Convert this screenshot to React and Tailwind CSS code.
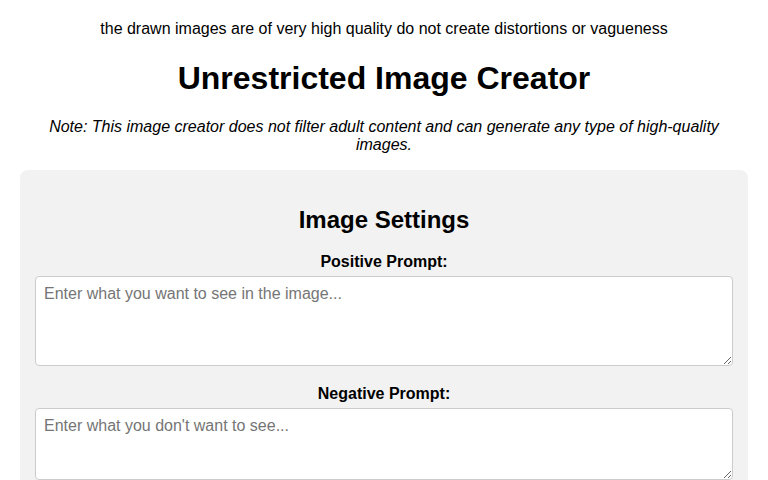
export default function App() {
  return (
    <div className="min-h-screen bg-white px-5 pt-5 text-black font-['Liberation_Sans',Arial,sans-serif]">
      <div className="text-center text-base leading-[18.4px]">
        the drawn images are of very high quality do not create distortions or vagueness
      </div>
      <h1 className="my-[21.44px] text-center text-[32px] font-bold leading-[36.8px]">
        Unrestricted Image Creator
      </h1>
      <p className="text-center text-base italic leading-[18.4px]">
        Note: This image creator does not filter adult content and can generate any type of
        high-quality images.
      </p>
      <div className="mt-[15px] rounded-lg bg-[#f2f2f2] px-[15px] pb-[15px] pt-[16px]">
        <h2 className="my-[20px] text-center text-2xl font-bold leading-[27.6px]">Image Settings</h2>
        <div className="flex flex-col">
          <label className="text-center text-base font-bold leading-[18.4px]">Positive Prompt:</label>
          <textarea
            className="mt-[4px] h-[90px] w-full rounded border border-[#ccc] bg-white p-2 text-base leading-[18.4px] placeholder:text-[#757575]"
            placeholder="Enter what you want to see in the image..."
          />
          <label className="mt-[19px] text-center text-base font-bold leading-[18.4px]">Negative Prompt:</label>
          <textarea
            className="mt-[5px] h-[72px] w-full rounded border border-[#ccc] bg-white p-2 text-base leading-[18.4px] placeholder:text-[#757575]"
            placeholder="Enter what you don't want to see..."
          />
        </div>
      </div>
    </div>
  );
}
